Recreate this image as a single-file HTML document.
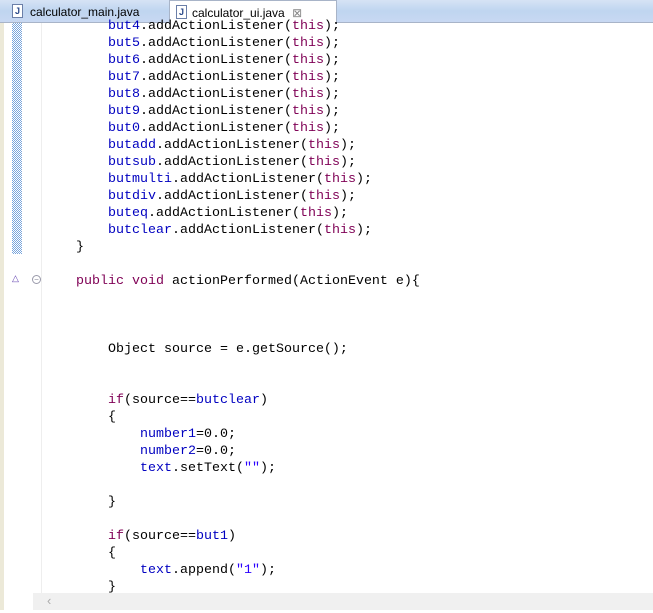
<!DOCTYPE html>
<html><head><style>
body{margin:0;width:653px;height:613px;overflow:hidden;background:#fff;position:relative;font-family:"Liberation Sans",sans-serif}
#tabs{position:absolute;left:0;top:0;width:653px;height:22px;background:linear-gradient(#d6e3f5,#bfd5f0 50%,#c8d8f2);border-bottom:1px solid #a8b4c8}
.tab{position:absolute;top:0;height:22px;font-size:12px;line-height:22px;color:#000}
.ic{position:absolute;top:4px;width:9px;height:12px;border:1px solid #6b7fa8;background:#fff;font:bold 9px/12px "Liberation Sans";text-align:center;color:#2b4a8a}
#t2{left:169px;width:166px;background:#fff;border:1px solid #a8b4c8;border-bottom:none;height:23px}
#frame{position:absolute;left:0;top:23px;width:4px;height:590px;background:#ece9d8}
#gut{position:absolute;left:4px;top:23px;width:37px;height:570px;background:#fff;border-right:1px solid #eee}
#qd{position:absolute;left:12px;top:23px;width:10px;height:231px;background:repeating-conic-gradient(#7aa6dc 0 25%,#ffffff 0 50%) 0 0/2px 2px}
#code{position:absolute;left:44px;top:18px;font-family:"Liberation Mono",monospace;font-size:13.33px;line-height:17px;white-space:pre;color:#000}
.f{color:#0000c0}.k{color:#7f0055}.s{color:#2a00ff}
#sb{position:absolute;left:33px;top:593px;width:620px;height:17px;background:#f0f0f0}
#bot{position:absolute;left:0;top:610px;width:653px;height:3px;background:#fff}
</style></head><body>
<div id="tabs">
<div class="tab" style="left:0;width:168px"><span class="ic" style="left:12px">J</span><span style="position:absolute;left:30px;top:1px">calculator_main.java</span></div>
<div class="tab" id="t2"><span class="ic" style="left:6px">J</span><span style="position:absolute;left:22px;top:1px;white-space:nowrap">calculator_ui.java <span style="color:#888;margin-left:4px">⊠</span></span></div>
</div>
<div id="frame"></div><div id="gut"></div><div id="qd"></div>
<div style="position:absolute;left:12px;top:273px;color:#6040b0;font-size:9px">△</div>
<div style="position:absolute;left:32px;top:275px;width:7px;height:7px;border:1px solid #99a;border-radius:50%;font-size:8px;line-height:7px;text-align:center;color:#889">−</div>
<div id="code">        <span class="f">but4</span>.addActionListener(<span class="k">this</span>);
        <span class="f">but5</span>.addActionListener(<span class="k">this</span>);
        <span class="f">but6</span>.addActionListener(<span class="k">this</span>);
        <span class="f">but7</span>.addActionListener(<span class="k">this</span>);
        <span class="f">but8</span>.addActionListener(<span class="k">this</span>);
        <span class="f">but9</span>.addActionListener(<span class="k">this</span>);
        <span class="f">but0</span>.addActionListener(<span class="k">this</span>);
        <span class="f">butadd</span>.addActionListener(<span class="k">this</span>);
        <span class="f">butsub</span>.addActionListener(<span class="k">this</span>);
        <span class="f">butmulti</span>.addActionListener(<span class="k">this</span>);
        <span class="f">butdiv</span>.addActionListener(<span class="k">this</span>);
        <span class="f">buteq</span>.addActionListener(<span class="k">this</span>);
        <span class="f">butclear</span>.addActionListener(<span class="k">this</span>);
    }

    <span class="k">public void</span> actionPerformed(ActionEvent e){



        Object source = e.getSource();


        <span class="k">if</span>(source==<span class="f">butclear</span>)
        {
            <span class="f">number1</span>=0.0;
            <span class="f">number2</span>=0.0;
            <span class="f">text</span>.setText(<span class="s">""</span>);

        }

        <span class="k">if</span>(source==<span class="f">but1</span>)
        {
            <span class="f">text</span>.append(<span class="s">"1"</span>);
        }</div>
<div id="sb"><span style="position:absolute;left:14px;top:0;color:#aaa;font-size:13px">‹</span></div>
<div id="bot"></div>
</body></html>
